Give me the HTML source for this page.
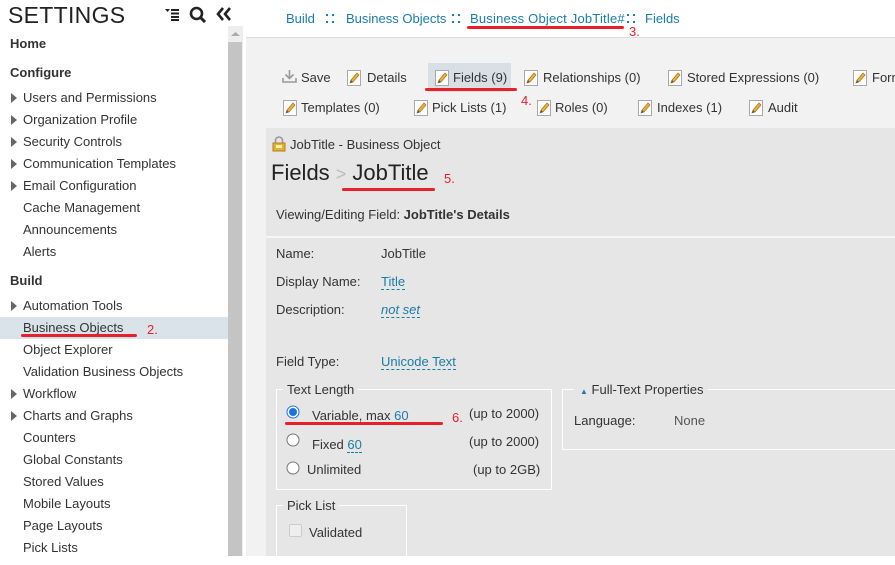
<!DOCTYPE html>
<html><head><meta charset="utf-8"><style>
*{margin:0;padding:0;box-sizing:border-box}
body{width:895px;height:556px;overflow:hidden;position:relative;background:#fff;font-family:"Liberation Sans",sans-serif;font-size:13px;color:#333}
.a{position:absolute;white-space:nowrap}
.lk{color:#1a7ca8}
.dl{color:#1a7ca8;border-bottom:1px dashed #1a7ca8;line-height:15px}
.red{position:absolute;height:3px;background:#e8202a;border-radius:2px}
.rn{position:absolute;color:#e8202a;font-size:13px}
.tri{position:absolute;width:0;height:0;border-top:5px solid transparent;border-bottom:5px solid transparent;border-left:6px solid #666}
.pi{position:absolute;width:14px;height:16px}
.side .a{left:23px}
</style></head><body>
<!-- sidebar -->
<div class="a" style="left:8px;top:2px;font-size:23px;color:#222;letter-spacing:0.3px">SETTINGS</div>
<svg class="a" style="left:165px;top:8px" width="16" height="13"><path d="M0 1h5l-2.5 3z" fill="#222"/><rect x="6" y="1" width="8" height="2" fill="#222"/><rect x="6" y="4.5" width="8" height="2" fill="#222"/><rect x="6" y="8" width="8" height="2" fill="#222"/><rect x="6" y="11" width="8" height="2" fill="#222"/></svg>
<svg class="a" style="left:189px;top:6px" width="18" height="17"><circle cx="7.5" cy="7.5" r="5.5" fill="none" stroke="#222" stroke-width="2.6"/><path d="M11.5 11.5l4.5 4.5" stroke="#222" stroke-width="3"/></svg>
<svg class="a" style="left:216px;top:7px" width="16" height="14"><path d="M7 1L2 7l5 6M14 1L9 7l5 6" fill="none" stroke="#222" stroke-width="2.6"/></svg>
<div class="a" style="left:228px;top:26px;width:15px;height:530px;background:#eee"></div>
<div class="a" style="left:228px;top:42px;width:14px;height:514px;background:#c4c4c4"></div>
<svg class="a" style="left:231px;top:31px" width="9" height="6"><path d="M0 5l4.5-4 4.5 4z" fill="#aaa"/></svg>
<div class="a" style="left:0;top:317px;width:228px;height:22px;background:#dbe3ea"></div>
<div class="side">
<div class="a" style="left:10px!important;top:36px;font-weight:bold;color:#333">Home</div>
<div class="a" style="left:10px!important;top:65px;font-weight:bold;color:#333">Configure</div>
<div class="a" style="top:90px">Users and Permissions</div>
<div class="a" style="top:112px">Organization Profile</div>
<div class="a" style="top:134px">Security Controls</div>
<div class="a" style="top:156px">Communication Templates</div>
<div class="a" style="top:178px">Email Configuration</div>
<div class="a" style="top:200px">Cache Management</div>
<div class="a" style="top:222px">Announcements</div>
<div class="a" style="top:244px">Alerts</div>
<div class="a" style="left:10px!important;top:273px;font-weight:bold;color:#333">Build</div>
<div class="a" style="top:298px">Automation Tools</div>
<div class="a" style="top:320px">Business Objects</div>
<div class="a" style="top:342px">Object Explorer</div>
<div class="a" style="top:364px">Validation Business Objects</div>
<div class="a" style="top:386px">Workflow</div>
<div class="a" style="top:408px">Charts and Graphs</div>
<div class="a" style="top:430px">Counters</div>
<div class="a" style="top:452px">Global Constants</div>
<div class="a" style="top:474px">Stored Values</div>
<div class="a" style="top:496px">Mobile Layouts</div>
<div class="a" style="top:518px">Page Layouts</div>
<div class="a" style="top:540px">Pick Lists</div>
</div>
<div class="tri" style="left:11px;top:93px"></div>
<div class="tri" style="left:11px;top:115px"></div>
<div class="tri" style="left:11px;top:137px"></div>
<div class="tri" style="left:11px;top:159px"></div>
<div class="tri" style="left:11px;top:181px"></div>
<div class="tri" style="left:11px;top:301px"></div>
<div class="tri" style="left:11px;top:389px"></div>
<div class="tri" style="left:11px;top:411px"></div>
<div class="red" style="left:21px;top:334px;width:116px"></div>
<div class="rn" style="left:147px;top:322px">2.</div>
<!-- header -->
<svg width="0" height="0" style="position:absolute"><defs><g id="cc" fill="#1a7ca8"><rect x="0" y="0" width="2" height="2"/><rect x="6" y="0" width="2" height="2"/><rect x="0" y="7" width="2" height="2"/><rect x="6" y="7" width="2" height="2"/></g></defs></svg>
<div class="a lk" style="left:286px;top:11px">Build</div>
<svg class="a" style="left:326px;top:14px" width="8" height="9"><use href="#cc"/></svg>
<div class="a lk" style="left:346px;top:11px">Business Objects</div>
<svg class="a" style="left:452px;top:14px" width="8" height="9"><use href="#cc"/></svg>
<div class="a lk" style="left:470px;top:11px;letter-spacing:0.2px">Business Object JobTitle#</div>
<svg class="a" style="left:627px;top:14px" width="8" height="9"><use href="#cc"/></svg>
<div class="a lk" style="left:645px;top:11px">Fields</div>
<div class="red" style="left:467px;top:26px;width:157px"></div>
<div class="rn" style="left:629px;top:24px">3.</div>
<!-- main -->
<div class="a" style="left:246px;top:37px;width:649px;height:519px;background:#f2f2f2;border-top:1px solid #ddd"></div>
<div class="a" style="left:428px;top:63px;width:83px;height:29px;background:#d8e0e6"></div>
<svg class="a" style="left:282px;top:69px" width="15" height="14"><path d="M7.5 1v8M3.5 5.5l4 4 4-4M1 9v4h13V9" fill="none" stroke="#999" stroke-width="1.6"/></svg>
<div class="a" style="left:301px;top:70px">Save</div>
<svg width="0" height="0" style="position:absolute"><defs><g id="pn"><rect x="0.5" y="0.5" width="13" height="15" fill="#fff" stroke="#aaa"/><path d="M3 13l1-3 6-7 2 2-6 7z" fill="#f0b030" stroke="#a07020" stroke-width="0.7"/><path d="M3 13l1-3 2 2z" fill="#555"/></g></defs></svg>
<svg class="pi" style="left:347px;top:70px"><use href="#pn"/></svg><div class="a" style="left:367px;top:70px">Details</div>
<svg class="pi" style="left:435px;top:70px"><use href="#pn"/></svg><div class="a" style="left:453px;top:70px">Fields (9)</div>
<svg class="pi" style="left:524px;top:70px"><use href="#pn"/></svg><div class="a" style="left:543px;top:70px">Relationships (0)</div>
<svg class="pi" style="left:668px;top:70px"><use href="#pn"/></svg><div class="a" style="left:687px;top:70px">Stored Expressions (0)</div>
<svg class="pi" style="left:853px;top:70px"><use href="#pn"/></svg><div class="a" style="left:872px;top:70px">Form</div>
<svg class="pi" style="left:283px;top:100px"><use href="#pn"/></svg><div class="a" style="left:301px;top:100px">Templates (0)</div>
<svg class="pi" style="left:414px;top:100px"><use href="#pn"/></svg><div class="a" style="left:432px;top:100px">Pick Lists (1)</div>
<svg class="pi" style="left:537px;top:100px"><use href="#pn"/></svg><div class="a" style="left:555px;top:100px">Roles (0)</div>
<svg class="pi" style="left:638px;top:100px"><use href="#pn"/></svg><div class="a" style="left:657px;top:100px">Indexes (1)</div>
<svg class="pi" style="left:749px;top:100px"><use href="#pn"/></svg><div class="a" style="left:768px;top:100px">Audit</div>
<div class="red" style="left:425px;top:88px;width:92px"></div>
<div class="rn" style="left:521px;top:93px">4.</div>
<!-- panel -->
<div class="a" style="left:266px;top:128px;width:629px;height:428px;background:#e6e6e6"></div>
<div class="a" style="left:266px;top:236px;width:629px;height:2px;background:#f6f6f6"></div>
<svg class="a" style="left:272px;top:136px" width="14" height="16"><path d="M3.5 7V4.5a3.5 3.5 0 0 1 7 0V7" fill="none" stroke="#999" stroke-width="1.6"/><rect x="1" y="7" width="12" height="8" fill="#e8b030" stroke="#b08020"/><rect x="4" y="9" width="6" height="3" fill="#fff3b0"/></svg>
<div class="a" style="left:290px;top:137px">JobTitle - Business Object</div>
<div class="a" style="left:271px;top:160px;font-size:22px;color:#222">Fields <span style="color:#bbb;font-size:18px">&gt;</span> JobTitle</div>
<div class="red" style="left:342px;top:188px;width:93px"></div>
<div class="rn" style="left:444px;top:171px">5.</div>
<div class="a" style="left:276px;top:207px">Viewing/Editing Field: <b style="color:#333">JobTitle's Details</b></div>
<div class="a" style="left:276px;top:246px">Name:</div><div class="a" style="left:381px;top:246px">JobTitle</div>
<div class="a" style="left:276px;top:274px">Display Name:</div><div class="a dl" style="left:381px;top:274px">Title</div>
<div class="a" style="left:276px;top:302px">Description:</div><div class="a dl" style="left:381px;top:302px;font-style:italic">not set</div>
<div class="a" style="left:276px;top:354px">Field Type:</div><div class="a dl" style="left:381px;top:354px">Unicode Text</div>
<div class="a" style="left:276px;top:389px;width:276px;height:101px;border:1px solid #fff"></div>
<div class="a" style="left:283px;top:382px;background:#e6e6e6;padding:0 4px">Text Length</div>
<svg class="a" style="left:286px;top:405px" width="14" height="14"><circle cx="7" cy="7" r="6" fill="#fff" stroke="#1a73e8" stroke-width="1"/><circle cx="7" cy="7" r="4" fill="#1a73e8"/></svg>
<div class="a" style="left:312px;top:408px">Variable, max <span class="lk">60</span></div>
<div class="a" style="left:469px;top:406px">(up to 2000)</div>
<svg class="a" style="left:286px;top:433px" width="14" height="14"><circle cx="7" cy="7" r="6" fill="#fff" stroke="#777"/></svg>
<div class="a" style="left:312px;top:437px">Fixed <span class="dl">60</span></div>
<div class="a" style="left:469px;top:434px">(up to 2000)</div>
<svg class="a" style="left:286px;top:461px" width="14" height="14"><circle cx="7" cy="7" r="6" fill="#fff" stroke="#777"/></svg>
<div class="a" style="left:307px;top:462px">Unlimited</div>
<div class="a" style="left:473px;top:462px">(up to 2GB)</div>
<div class="red" style="left:285px;top:422px;width:158px"></div>
<div class="rn" style="left:452px;top:410px">6.</div>
<div class="a" style="left:562px;top:389px;width:340px;height:61px;border:1px solid #fff"></div>
<div class="a" style="left:574px;top:382px;background:#e6e6e6;padding:0 4px 0 6px"><span style="font-size:8px;color:#1a7ca8">▲</span> Full-Text Properties</div>
<div class="a" style="left:574px;top:413px">Language:</div>
<div class="a" style="left:674px;top:413px;color:#555">None</div>
<div class="a" style="left:276px;top:505px;width:131px;height:60px;border:1px solid #fff"></div>
<div class="a" style="left:283px;top:498px;background:#e6e6e6;padding:0 4px">Pick List</div>
<div class="a" style="left:289px;top:524px;width:13px;height:13px;border:1px solid #ccc;background:#eee;border-radius:2px"></div>
<div class="a" style="left:309px;top:525px">Validated</div>
</body></html>
